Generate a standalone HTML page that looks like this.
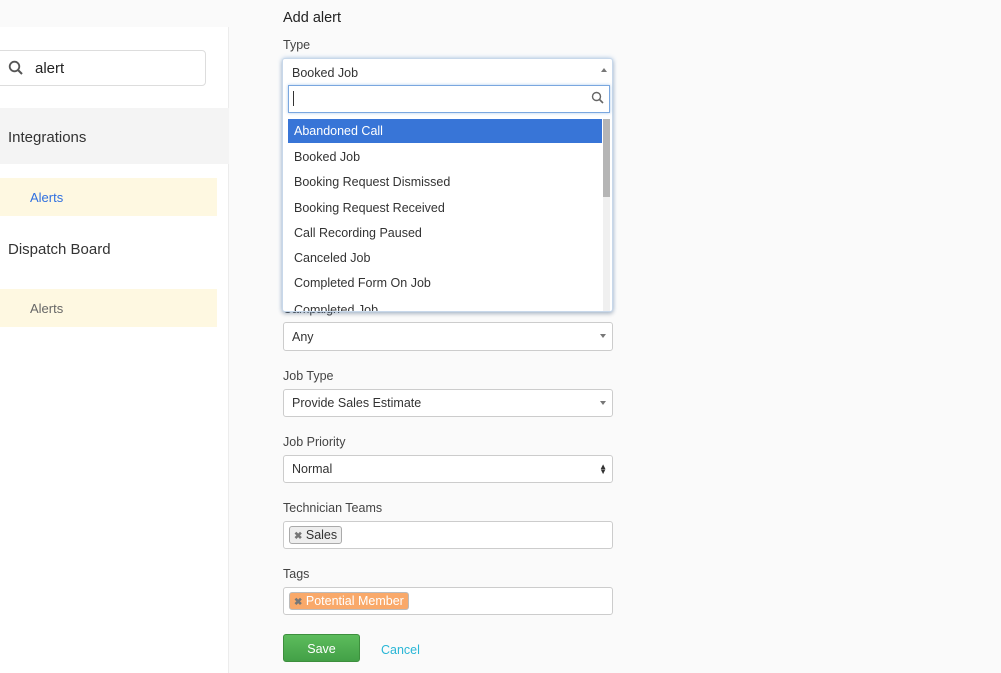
<!DOCTYPE html>
<html><head><style>
*{box-sizing:border-box;margin:0;padding:0}
body{width:1001px;height:673px;background:#fafafa;font-family:"Liberation Sans",sans-serif;color:#333;position:relative;overflow:hidden}
.a{position:absolute}
.side{left:0;top:27px;width:229px;height:646px;background:#fff;border-right:1px solid #ececec}
.lbl{font-size:12.5px;color:#444}
.box{background:#fff;border:1px solid #ccc;border-radius:3px;font-size:12.5px;color:#333;padding-left:8px;display:flex;align-items:center}
.arr{position:absolute;right:6px;top:11px;width:0;height:0;border-left:3px solid transparent;border-right:3px solid transparent;border-top:4px solid #777}
.opt{position:absolute;left:6px;font-size:12.5px;color:#333}
</style></head><body>
<div class="a side"></div>
<div class="a" style="left:-4px;top:50px;width:210px;height:36px;background:#fff;border:1px solid #ddd;border-radius:4px"></div>
<svg class="a" style="left:8px;top:60px" width="16" height="16" viewBox="0 0 16 16"><circle cx="6.5" cy="6.5" r="4.8" fill="none" stroke="#555" stroke-width="1.8"/><path d="M10 10l4 4" stroke="#555" stroke-width="2"/></svg>
<div class="a" style="left:35px;top:60px;font-size:15px;color:#222">alert</div>
<div class="a" style="left:0;top:108px;width:229px;height:56px;background:#f4f4f4"></div>
<div class="a" style="left:8px;top:129px;font-size:15px;color:#333">Integrations</div>
<div class="a" style="left:0;top:178px;width:217px;height:38px;background:#fef8e1"></div>
<div class="a" style="left:30px;top:190px;font-size:13px;color:#2f6fe0">Alerts</div>
<div class="a" style="left:8px;top:241px;font-size:15px;color:#333">Dispatch Board</div>
<div class="a" style="left:0;top:289px;width:217px;height:38px;background:#fef8e1"></div>
<div class="a" style="left:30px;top:301px;font-size:13px;color:#666">Alerts</div>

<div class="a" style="left:283px;top:10px;font-size:14.5px;color:#222">Add alert</div>
<div class="a lbl" style="left:283px;top:38px">Type</div>

<div class="a lbl" style="left:283px;top:302px">Campaign</div>
<div class="a box" style="left:283px;top:322px;width:330px;height:29px">Any<div class="arr"></div></div>
<div class="a lbl" style="left:283px;top:369px">Job Type</div>
<div class="a box" style="left:283px;top:389px;width:330px;height:28px">Provide Sales Estimate<div class="arr"></div></div>
<div class="a lbl" style="left:283px;top:435px">Job Priority</div>
<div class="a box" style="left:283px;top:455px;width:330px;height:28px">Normal<div style="position:absolute;right:5px;top:8px;font-size:8px;line-height:5px;color:#333">▲<br>▼</div></div>
<div class="a lbl" style="left:283px;top:501px">Technician Teams</div>
<div class="a box" style="left:283px;top:521px;width:330px;height:28px;padding-left:5px"><span style="background:#eee;border:1px solid #aaa;border-radius:3px;padding:1px 4px;font-size:12.5px"><b style="color:#777;font-size:10px">✖</b> Sales</span></div>
<div class="a lbl" style="left:283px;top:567px">Tags</div>
<div class="a box" style="left:283px;top:587px;width:330px;height:28px;padding-left:5px"><span style="background:#f9a96a;border:1px solid #bbb;border-radius:3px;padding:1px 4px;font-size:12.5px;color:#fff"><b style="color:#777;font-size:10px">✖</b> Potential Member</span></div>
<div class="a" style="left:283px;top:634px;width:77px;height:28px;background:linear-gradient(#5cbc5c,#43a047);border:1px solid #3d8f3d;border-radius:3px;color:#fff;font-size:12.5px;text-align:center;line-height:28px">Save</div>
<div class="a" style="left:381px;top:643px;font-size:12.5px;color:#29b6d6">Cancel</div>

<div class="a" style="left:282px;top:58px;width:331px;height:254px;background:#fff;border:1px solid #c8d8ea;border-radius:3px;box-shadow:0 0 5px rgba(90,150,220,.45),0 2px 4px rgba(0,0,0,.2)">
 <div class="a" style="left:9px;top:7px;font-size:12.5px">Booked Job</div>
 <div class="a" style="right:5px;top:9px;width:0;height:0;border-left:3px solid transparent;border-right:3px solid transparent;border-bottom:4px solid #777"></div>
 <div class="a" style="left:5px;top:26px;width:322px;height:28px;border:1px solid #7aa7df;box-shadow:0 0 3px rgba(90,150,220,.5)"></div>
 <div class="a" style="left:10px;top:32px;width:1px;height:15px;background:#333"></div>
 <svg class="a" style="left:308px;top:32px" width="14" height="14" viewBox="0 0 14 14"><circle cx="5.5" cy="5.5" r="4" fill="none" stroke="#666" stroke-width="1.4"/><path d="M8.5 8.5l3.5 3.5" stroke="#666" stroke-width="1.6"/></svg>
 <div class="a" style="left:5px;top:60px;width:314px;height:24px;background:#3875d7"></div>
 <div class="a" style="left:320px;top:60px;width:7px;height:192px;background:#f0f0f0"></div>
 <div class="a" style="left:320px;top:60px;width:7px;height:78px;background:#b5b5b5"></div>
 <div class="opt" style="left:11px;top:65px;color:#fff">Abandoned Call</div>
 <div class="opt" style="left:11px;top:91px">Booked Job</div>
 <div class="opt" style="left:11px;top:116px">Booking Request Dismissed</div>
 <div class="opt" style="left:11px;top:142px">Booking Request Received</div>
 <div class="opt" style="left:11px;top:167px">Call Recording Paused</div>
 <div class="opt" style="left:11px;top:192px">Canceled Job</div>
 <div class="opt" style="left:11px;top:217px">Completed Form On Job</div>
 <div class="a" style="left:0;top:244px;width:318px;height:8px;overflow:hidden"><div class="opt" style="left:11px;top:0px">Completed Job</div></div>
</div>
</body></html>
